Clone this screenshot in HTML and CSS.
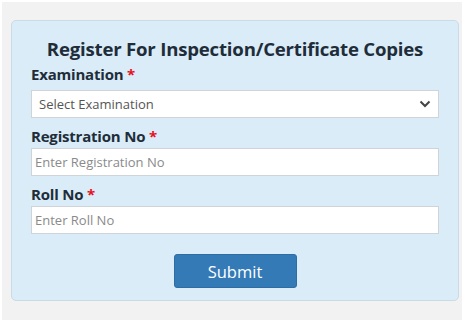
FILE: index.html
```html
<!DOCTYPE html>
<html>
<head>
<meta charset="utf-8">
<link rel="stylesheet" href="styles.css">
</head>
<body>
<div class="page">
  <form class="card">
    <h2 class="title">Register For Inspection/Certificate Copies</h2>
    <label class="label first">Examination <span class="req">*</span></label>
    <div class="select">
      <span>Select Examination</span>
      <svg class="chev" width="12" height="8" viewBox="0 0 12 8"><path d="M1.5 1.5 L6 6 L10.5 1.5" fill="none" stroke="#444" stroke-width="2"/></svg>
    </div>
    <label class="label">Registration No <span class="req">*</span></label>
    <input class="input" type="text" placeholder="Enter Registration No">
    <label class="label">Roll No <span class="req">*</span></label>
    <input class="input" type="text" placeholder="Enter Roll No">
    <div class="actions">
      <button type="button" class="btn">Submit</button>
    </div>
  </form>
</div>
</body>
</html>
```
FILE: styles.css
```css
html, body {
  margin: 0;
  padding: 0;
  background: #ffffff;
}
body {
  font-family: "Open Sans", "Noto Sans", sans-serif;
  color: #222;
}
.page {
  margin: 2px 12px 3px 2px;
  width: 460px;
  height: 318px;
  background: #f2f2f2;
  box-sizing: border-box;
  padding: 18px 0 0 9px;
}
.card {
  width: 448px;
  height: 281px;
  box-sizing: border-box;
  background: #d9ecf7;
  border: 1px solid #c9dbe6;
  border-radius: 5px;
  padding: 15px 19px 0 19px;
  display: flex;
  flex-direction: column;
}
.title {
  margin: 0;
  font-size: 18.6px;
  font-weight: 700;
  text-align: center;
  color: #1f2d3a;
  line-height: 26px;
  letter-spacing: -0.2px;
}
.label {
  font-size: 15px;
  font-weight: 700;
  color: #1f2d3a;
  line-height: 20px;
  height: 22px;
  letter-spacing: -0.2px;
}
.label.first {
  margin-top: 2px;
  height: 24px;
}
.req {
  color: #e8101b;
}
.select, .input {
  height: 28px;
  box-sizing: border-box;
  background: #fff;
  border: 1px solid #cfd4d8;
  font-family: inherit;
  font-size: 13px;
  color: #555;
  margin-bottom: 8px;
}
.select {
  display: flex;
  align-items: center;
  justify-content: space-between;
  padding: 0 7px 0 7px;
  margin-top: 2px;
}
.input {
  width: 100%;
  padding: 0 3px;
  outline: none;
}
.input::placeholder {
  color: #8a8a8a;
}
.actions {
  display: flex;
  justify-content: center;
  margin-top: 12px;
}
.btn {
  width: 123px;
  height: 34px;
  background: #337ab7;
  color: #fff;
  border: 1px solid #2e6da4;
  border-radius: 3px;
  font-family: inherit;
  font-size: 16.5px;
  padding: 0;
}
```
